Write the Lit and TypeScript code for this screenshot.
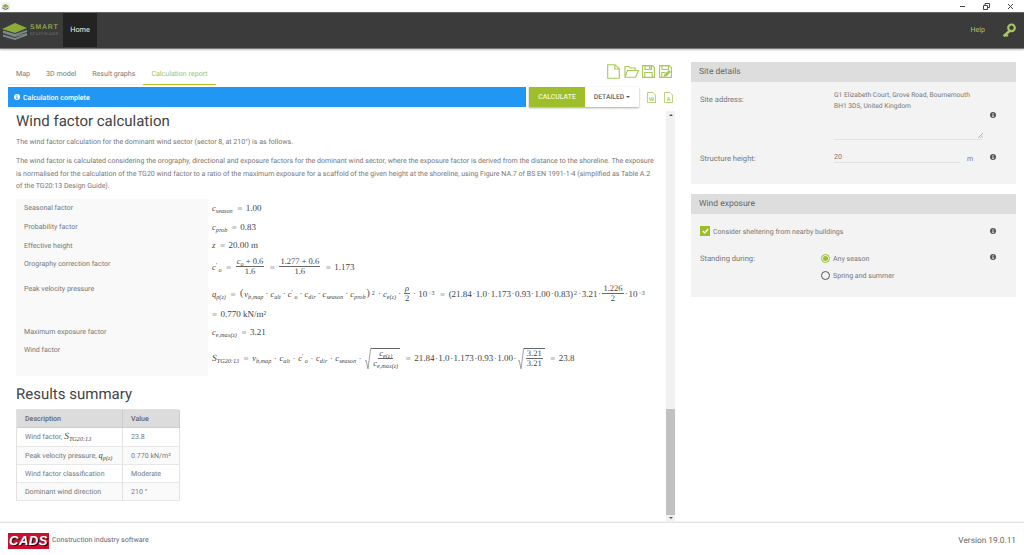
import { LitElement, html, css } from "lit";
import { customElement } from "lit/decorators.js";

const i = (s: string) => html`<i>${s}</i>`;
const sym = (b: string, sub: string, sup = "") =>
  html`<span class="sym"><i>${b}</i>${sup ? html`<sup class="pr">${sup}</sup>` : ""}<sub>${sub}</sub></span>`;
const frac = (a: unknown, b: unknown) =>
  html`<span class="frac"><span class="num">${a}</span><span class="den">${b}</span></span>`;
const rad = (c: unknown) =>
  html`<span class="rad"><svg class="radsign" viewBox="0 0 10 28" preserveAspectRatio="none"><path d="M0 17 L2 16 L5 27 L9.5 .5 L10 .5" fill="none" stroke="#555" stroke-width=".8"/></svg><span class="radin">${c}</span></span>`;
const info = () => html`<svg class="info" viewBox="0 0 16 16"><circle cx="8" cy="8" r="8" fill="currentColor"/><rect x="6.8" y="2.600" width="2.6" height="2.4" fill="var(--ib,#f3f3f3)"/><path d="M5.8 6.500h3.600v5.400h1v1.500H5.800v-1.500h1V8H5.800z" fill="var(--ib,#f3f3f3)"/></svg>`;
const g = "#a7c957";
const docI = html`<svg width="13" height="15" viewBox="0 0 13 15"><path d="M.7.7H8L12.300 4.700V14.300H.7zM7.800 .7V5H12.300" fill="#fff" stroke="${g}" stroke-width="1.100"/></svg>`;
const folderI = html`<svg width="15" height="13" viewBox="0 0 15 13"><path d="M1 12.300V1.500h4l1.200 1.500h5V5.500M1 12.300 3.500 5.500H14.500L11.500 12.300z" fill="none" stroke="${g}" stroke-width="1.100"/></svg>`;
const saveI = html`<svg width="13" height="13" viewBox="0 0 13 13"><path d="M.6.6H10.500L12.400 2.500V12.400H.6z" fill="none" stroke="${g}" stroke-width="1.100"/><path d="M3 .6H9.500V4.500H3zM2.800 12.400V7.500H10.200V12.400" fill="none" stroke="${g}" stroke-width="1.100"/><rect x="7" y="1.300" width="1.500" height="2.500" fill="${g}"/></svg>`;
const saveAsI = html`<svg width="13" height="13" viewBox="0 0 13 13"><path d="M.6.6H10.500L12.400 2.500V12.400H.6z" fill="none" stroke="${g}" stroke-width="1.100"/><path d="M3 .6H9.500V4.500H3zM2.800 12.400V7.500H6.500" fill="none" stroke="${g}" stroke-width="1.100"/><path d="M4.500 12 5.500 9 10 5 12 7 7.500 11.200z" fill="${g}"/></svg>`;
const fileI = (t: string) => html`<svg width="9" height="11" viewBox="0 0 9 11"><path d="M.5.5H6L8.500 3V10.500H.5z" fill="#fff" stroke="${g}" stroke-width=".8"/><text x="4.500" y="8.600" font-size="5.500" font-weight="700" font-family="Liberation Sans" text-anchor="middle" fill="${g}">${t}</text></svg>`;

@customElement("app-root")
export class AppRoot extends LitElement {
  static styles = css`
    :host { display: flex; flex-direction: column; width: 1024px; height: 555px; overflow: hidden; background: #fff; font-family: Roboto, sans-serif; font-size: 7.05px; color: #777; text-rendering: geometricPrecision; }
    .titlebar { height: 12px; display: flex; justify-content: space-between; align-items: center; padding: 0 10px 0 1px; flex: none; }
    .wctl { display: flex; align-items: center; gap: 17px; color: #444; }
    .wctl svg { display: block; }
    .header { height: 37px; flex: none; display: flex; align-items: stretch; background: #3b3b3b; border-top: 1px solid #666; border-bottom: 1px solid #777; box-sizing: border-box; box-shadow: 0 1px 2px rgba(0,0,0,.25); }
    .logo { width: 63px; flex: none; display: flex; align-items: center; padding-left: 2px; box-sizing: border-box; gap: 2px; }
    .logotxt { display: flex; flex-direction: column; font-family: "Liberation Sans", sans-serif; font-weight: 700; color: #8aa34a; font-size: 6.800px; line-height: 7.500px; letter-spacing: .9px; }
    .logotxt small { font-size: 3.800px; font-weight: 400; line-height: 5px; color: #7a7a7a; letter-spacing: .3px; }
    .home { width: 34px; background: #232323; color: #eee; display: flex; align-items: center; justify-content: center; font-size: 7.300px; margin-bottom: 1px; padding-bottom: 2px; box-sizing: border-box; }
    .sp { flex: 1; }
    .help { color: #a9c46c; align-self: center; margin-right: 17px; padding-bottom: 2px; }
    .key { align-self: center; margin-right: 8px; }
    .main { flex: 1; min-height: 0; display: grid; grid-template-columns: 683px 1fr; }
    .left { display: flex; flex-direction: column; min-height: 0; padding-left: 8px; }
    .tabsrow { height: 36px; flex: none; display: flex; align-items: flex-end; justify-content: space-between; padding-right: 11px; }
    .tabs { display: flex; border-bottom: 1px solid #eee; height: 21.500px; box-sizing: border-box; }
    .tab { padding: 5px 8px 0; height: 21px; box-sizing: border-box; color: #777; font-size: 7.100px; white-space: nowrap; }
    .tab.on { color: #a5c354; border-bottom: 1.500px solid #a5c828; height: 21.500px; }
    .tools { display: flex; gap: 3.700px; align-items: center; padding-bottom: 6px; }
    .tools svg { display: block; }
    .actions { height: 20px; flex: none; margin-top: 2px; display: flex; align-items: stretch; }
    .alert { width: 518px; background: #2196f3; color: #fff; display: flex; align-items: center; padding-left: 6px; box-sizing: border-box; gap: 3px; font-weight: 500; --ib: #2196f3; }
    .alert .info { color: #fff; }
    .info { width: 6px; height: 6px; display: block; flex: none; color: #555; }
    .btns { display: flex; margin-left: 3px; box-shadow: 0 1px 2px rgba(0,0,0,.35); }
    .calc { width: 56px; background: #9fbf2a; color: #f3f6dc; display: flex; align-items: center; justify-content: center; font-weight: 500; font-size: 6.900px; }
    .det { width: 54px; background: #fff; color: #666; display: flex; align-items: center; justify-content: center; gap: 2px; font-weight: 500; font-size: 6.800px; }
    .caret { border: 2px solid transparent; border-top-color: #555; border-bottom: 0; width: 0; height: 0; }
    .files { display: flex; gap: 8px; margin-left: 8px; align-items: center; }
    .files svg { display: block; }
    .scrollwrap { flex: 1; min-height: 0; display: flex; margin-top: 4px; }
    .content { width: 658px; flex: none; padding-left: 8px; box-sizing: border-box; overflow: hidden; }
    h1 { font-weight: 400; font-size: 15px; line-height: 18px; color: #444; margin: 1px 0 0; }
    p { margin: 0; line-height: 12.500px; font-size: 7.060px; color: #777; width: 640px; }
    p.a { margin-top: 6px; }
    p.b { margin-top: 6.500px; }
    .calcs { display: grid; grid-template-columns: 192px 1fr; margin-top: 6px; width: 650px; }
    .lab { background: #f9f9f9; padding: 0 0 0 8px; color: #777; line-height: 9px; box-sizing: border-box; }
    .mth { padding-left: 4px; font-family: "Liberation Serif", serif; font-size: 9px; color: #444; white-space: nowrap; display: flex; align-items: center; box-sizing: border-box; }
    .mth .eq { margin: 0 3.500px 0 4.500px; }
    .r1 { height: 18.800px; padding-top: 4.500px; }
    .m1 { height: 18.800px; }
    .r2 { height: 24px; padding-top: 4px; }
    .m2 { height: 24px; }
    .r3 { height: 26px; padding-top: 5.500px; }
    .m3 { height: 26px; padding-top: 4px; }
    .r4, .m4 { height: 18px; }
    .r5, .m5 { height: 18px; }
    .r5 { padding-top: 4.500px; }
    .r6 { height: 35px; padding-top: 4.500px; }
    .m6 { height: 35px; }
    .m6 .dot { margin: 0 2.800px; }
    .sym { white-space: nowrap; }
    .sym i { font-size: 8.500px; }
    .sym sub { font-size: 6.200px; line-height: 0; vertical-align: -2px; font-style: italic; }
    .sym sup.pr { font-size: 6px; line-height: 0; vertical-align: 3px; margin-right: 1.500px; }
    .dot { margin: 0 2.200px; font-size: 8px; }
    .d { margin: 0 .6px; font-size: 8px; }
    .frac { display: inline-flex; flex-direction: column; align-items: center; vertical-align: middle; font-size: 8.500px; line-height: 9.800px; margin: 0 1px; }
    .num { border-bottom: .7px solid #666; padding: 0 1px; }
    .big { font-size: 10px; margin: 0 1px; }
    .rad { display: inline-flex; align-items: stretch; vertical-align: middle; margin: 0 1px; }
    .radsign { width: 6px; height: auto; align-self: stretch; }
    .radin { border-top: .7px solid #666; padding: 0 1px; display: inline-flex; align-items: center; }
    sup.p { font-size: 6px; line-height: 0; vertical-align: 3px; margin: 0 1px; }
    h2 { font-weight: 400; font-size: 15px; line-height: 18px; color: #444; margin: 9px 0 0; }
    .summary { margin-top: 6px; width: 163px; display: grid; grid-template-columns: 106px 57px; border: 1px solid #e2e2e2; border-right: 0; border-bottom: 0; box-sizing: border-box; }
    .summary > div { height: 18.200px; box-sizing: border-box; display: flex; align-items: center; padding-left: 8px; border-right: 1px solid #e2e2e2; border-bottom: 1px solid #e8e8e8; color: #777; white-space: nowrap; gap: 2px; }
    .summary > div.th { background: #dcdcdc; font-weight: 500; color: #666; border-color: #ccc; height: 18.500px; }
    .summary > div.alt { background: #fafafa; }
    .summary .sym { font-family: "Liberation Serif", serif; color: #444; }
    .bar { width: 9px; flex: none; background: #f1f1f1; display: flex; flex-direction: column; align-items: center; height: 410px; }
    .arrup { margin-top: 3px; border: 2px solid transparent; border-bottom-color: #555; border-top: 0; width: 0; height: 0; flex: none; }
    .thumbsp { flex: 1; }
    .thumb { width: 9px; height: 106px; background: #c1c1c1; flex: none; }
    .arrdn { margin: 2px 0; border: 2px solid transparent; border-top-color: #555; border-bottom: 0; width: 0; height: 0; flex: none; }
    .right { padding: 13px 8px 0; display: flex; flex-direction: column; gap: 10px; }
    .panel { background: #f3f3f3; }
    .ph { height: 20px; background: #dddddd; color: #666; font-size: 8.500px; display: flex; align-items: center; padding-left: 8px; }
    .row { display: grid; grid-template-columns: 134px 126px 1fr 6px; align-items: start; padding: 0 20px 0 9px; }
    .lbl { font-size: 7.600px; }
    .row .v { color: #777; line-height: 10.500px; }
    .s1 { padding-top: 7px; height: 66px; box-sizing: border-box; }
    .ta { border-bottom: 1px solid #e2e2e2; height: 51px; position: relative; box-sizing: border-box; grid-column: span 2; width: 149px; padding-top: 1px; font-size: 6.700px; white-space: nowrap; }
    .grip { position: absolute; right: 0; bottom: 1px; display: block; }
    .s1 .lbl { margin-top: 6px; }
    .s1 .i { margin-top: 23px; }
    .s2 { height: 36px; padding-top: 4px; box-sizing: border-box; }
    .inp { border-bottom: 1px solid #e2e2e2; height: 11px; width: 126px; box-sizing: border-box; }
    .s2 .m { padding-left: 7px; padding-top: 2px; }
    .s2 .lbl { margin-top: 2px; }
    .s2 .i { margin-top: 2px; }
    .chk { display: flex; align-items: center; gap: 3px; padding: 12px 20px 0 9px; }
    .box { width: 10px; height: 10px; background: #9fbf2a; display: flex; align-items: center; justify-content: center; flex: none; }
    .stand { display: grid; grid-template-columns: 121px 1fr 6px; padding: 17px 20px 17px 9px; align-items: start; }
    .stand .lbl, .stand .iw { padding-top: 1px; }
    .radios { display: flex; flex-direction: column; gap: 7px; }
    .radio { display: flex; align-items: center; gap: 3px; height: 10px; }
    .dotr { width: 9px; height: 9px; border-radius: 50%; border: 1px solid #555; box-sizing: border-box; flex: none; display: flex; align-items: center; justify-content: center; }
    .dotr.on { border-color: #9fbf2a; }
    .dotr.on::after { content: ""; width: 5px; height: 5px; border-radius: 50%; background: #9fbf2a; }
    .footer { height: 33px; flex: none; border-top: 1px solid #e2e2e2; display: flex; align-items: center; padding: 0 8px; box-sizing: border-box; box-shadow: 0 -1px 1px rgba(0,0,0,.04); }
    .cads { width: 41px; height: 16px; background: #c8102e; color: #fff; font: italic 700 13px "Liberation Sans", sans-serif; display: flex; align-items: center; justify-content: center; letter-spacing: .5px; margin-top: 3px; text-shadow: 1px 1px 0 #111; }
    .tag { margin-left: 3px; margin-top: 1px; color: #666; }
    .ver { margin-top: 4px; color: #666; font-size: 8.300px; }
  `;

  render() {
    const dn = html`<span class="d">·</span>`;
    const ds = html`<span class="dot">·</span>`;
    return html`
      <div class="titlebar">
        <svg width="9" height="9" viewBox="0 0 9 9"><rect width="9" height="9" fill="#f2f2f2"/><path d="M1 4 4.500 2 8 4 4.500 6z" fill="#8fb339"/><path d="M1.500 5 4.500 7 7.500 5v1.500L4.500 8 1.500 6.500z" fill="#667"/></svg>
        <div class="wctl">
          <svg width="7" height="5" viewBox="0 0 7 5"><path d="M1 2.500h5" stroke="#444" fill="none"/></svg>
          <svg width="7" height="7" viewBox="0 0 7 7"><path d="M.5 2.500h4v4h-4zM2 2.500v-2h4.500v4h-2" stroke="#444" fill="none"/></svg>
          <svg width="7" height="7" viewBox="0 0 7 7"><path d="M1 1l5 5M6 1l-5 5" stroke="#444" fill="none"/></svg>
        </div>
      </div>
      <div class="header">
        <div class="logo">
          <svg width="26" height="18" viewBox="0 0 26 18"><path d="M0 7 13 11 25 6 13 1z" fill="#8cab3a"/><path d="M1 8.500 13 12 25 8v2L13 14 4 11l9 3 12-3v2.500L13 18 1 14.500v-2L13 16l9-3-9 2L1 11z" fill="#7c8a8a"/></svg>
          <span class="logotxt">SMART<small>SCAFFOLDER</small></span>
        </div>
        <div class="home">Home</div>
        <div class="sp"></div>
        <div class="help">Help</div>
        <svg class="key" width="14" height="15" viewBox="0 0 14 15"><circle cx="9.500" cy="4.800" r="3.300" fill="none" stroke="#a9c85e" stroke-width="2.200"/><path d="M7 6.800 .8 12.300l1.800 2 1.400-1.300 1 1 1.500-1.500-1-1L8.800 8.500z" fill="#a9c85e"/></svg>
      </div>
      <div class="main">
        <div class="left">
          <div class="tabsrow">
            <div class="tabs">
              <div class="tab">Map</div>
              <div class="tab">3D model</div>
              <div class="tab">Result graphs</div>
              <div class="tab on">Calculation report</div>
            </div>
            <div class="tools">${docI}${folderI}${saveI}${saveAsI}</div>
          </div>
          <div class="actions">
            <div class="alert">${info()}Calculation complete</div>
            <div class="btns">
              <div class="calc">CALCULATE</div>
              <div class="det">DETAILED <span class="caret"></span></div>
            </div>
            <div class="files">${fileI("W")}${fileI("A")}</div>
          </div>
          <div class="scrollwrap">
            <div class="content">
              <h1>Wind factor calculation</h1>
              <p class="a">The wind factor calculation for the dominant wind sector (sector 8, at 210°) is as follows.</p>
              <p class="b">The wind factor is calculated considering the orography, directional and exposure factors for the dominant wind sector, where the exposure factor is derived from the distance to the shoreline. The exposure is normalised for the calculation of the TG20 wind factor to a ratio of the maximum exposure for a scaffold of the given height at the shoreline, using Figure NA.7 of BS EN 1991-1-4 (simplified as Table A.2 of the TG20:13 Design Guide).</p>
              <div class="calcs">
                <div class="lab r1">Seasonal factor</div>
                <div class="mth m1">${sym("c", "season")}<span class="eq">=</span>1.00</div>
                <div class="lab r1">Probability factor</div>
                <div class="mth m1">${sym("c", "prob")}<span class="eq">=</span>0.83</div>
                <div class="lab r1">Effective height</div>
                <div class="mth m1">${i("z")}<span class="eq">=</span>20.00 m</div>
                <div class="lab r2">Orography correction factor</div>
                <div class="mth m2">${sym("c", "o", "′")}<span class="eq">=</span>${frac(html`${sym("c", "o")} + 0.6`, "1.6")}<span class="eq">=</span>${frac("1.277 + 0.6", "1.6")}<span class="eq">=</span>1.173</div>
                <div class="lab r3">Peak velocity pressure</div>
                <div class="mth m3">${sym("q", "p(z)")}<span class="eq">=</span><span class="big">(</span>${sym("v", "b,map")}${ds}${sym("c", "alt")}${ds}${sym("c", "o", "′")}${ds}${sym("c", "dir")}${ds}${sym("c", "season")}${ds}${sym("c", "prob")}<span class="big">)</span><sup class="p">2</sup>${ds}${sym("c", "e(z)")}${ds}${frac(i("ρ"), "2")}${ds}10<sup class="p">−3</sup><span class="eq">=</span>(21.84${dn}1.0${dn}1.173${dn}0.93${dn}1.00${dn}0.83)<sup class="p">2</sup>${dn}3.21${dn}${frac("1.226", "2")}${dn}10<sup class="p">−3</sup></div>
                <div class="lab r4"></div>
                <div class="mth m4"><span class="eq" style="margin-left:0">=</span>0.770 kN/m²</div>
                <div class="lab r5">Maximum exposure factor</div>
                <div class="mth m5">${sym("c", "e,max(z)")}<span class="eq">=</span>3.21</div>
                <div class="lab r6">Wind factor</div>
                <div class="mth m6"><span class="sym"><i style="font-size:9.500px">S</i><sub>TG20:13</sub></span><span class="eq">=</span>${sym("v", "b,map")}${ds}${sym("c", "alt")}${ds}${sym("c", "o", "′")}${ds}${sym("c", "dir")}${ds}${sym("c", "season")}${ds}${rad(frac(sym("c", "e(z)"), sym("c", "e,max(z)")))}<span class="eq">=</span>21.84${dn}1.0${dn}1.173${dn}0.93${dn}1.00${dn}${rad(frac("3.21", "3.21"))}<span class="eq">=</span>23.8</div>
              </div>
              <h2>Results summary</h2>
              <div class="summary">
                <div class="th">Description</div><div class="th">Value</div>
                <div>Wind factor, <span class="sym"><i style="font-size:9.500px">S</i><sub>TG20:13</sub></span></div><div>23.8</div>
                <div class="alt">Peak velocity pressure, ${sym("q", "p(z)")}</div><div class="alt">0.770 kN/m²</div>
                <div>Wind factor classification</div><div>Moderate</div>
                <div class="alt">Dominant wind direction</div><div class="alt">210 °</div>
              </div>
            </div>
            <div class="bar">
              <span class="arrup"></span>
              <span class="thumbsp"></span>
              <span class="thumb"></span>
              <span class="arrdn"></span>
            </div>
          </div>
        </div>
        <div class="right">
          <div class="panel">
            <div class="ph">Site details</div>
            <div class="row s1">
              <div class="lbl">Site address:</div>
              <div class="ta v">G1 Elizabeth Court, Grove Road, Bournemouth<br>BH1 3DS, United Kingdom
                <svg class="grip" width="5" height="5" viewBox="0 0 5 5"><path d="M0 5 5 0M2.500 5 5 2.500" stroke="#999" stroke-width=".7"/></svg>
              </div>
              <div class="i">${info()}</div>
            </div>
            <div class="row s2">
              <div class="lbl">Structure height:</div>
              <div class="inp v">20</div>
              <div class="m">m</div>
              <div class="i">${info()}</div>
            </div>
          </div>
          <div class="panel">
            <div class="ph">Wind exposure</div>
            <div class="chk">
              <span class="box"><svg width="7" height="6" viewBox="0 0 7 6"><path d="M.8 3 2.700 5 6.200 1" stroke="#fff" stroke-width="1.200" fill="none"/></svg></span>
              Consider sheltering from nearby buildings
              <span class="sp"></span>${info()}
            </div>
            <div class="stand">
              <div class="lbl">Standing during:</div>
              <div class="radios">
                <div class="radio"><span class="dotr on"></span>Any season</div>
                <div class="radio"><span class="dotr"></span>Spring and summer</div>
              </div>
              <div class="iw">${info()}</div>
            </div>
          </div>
        </div>
      </div>
      <div class="footer">
        <div class="cads">CADS</div>
        <div class="tag">Construction industry software</div>
        <div class="sp"></div>
        <div class="ver">Version 19.0.11</div>
      </div>
    `;
  }
}
